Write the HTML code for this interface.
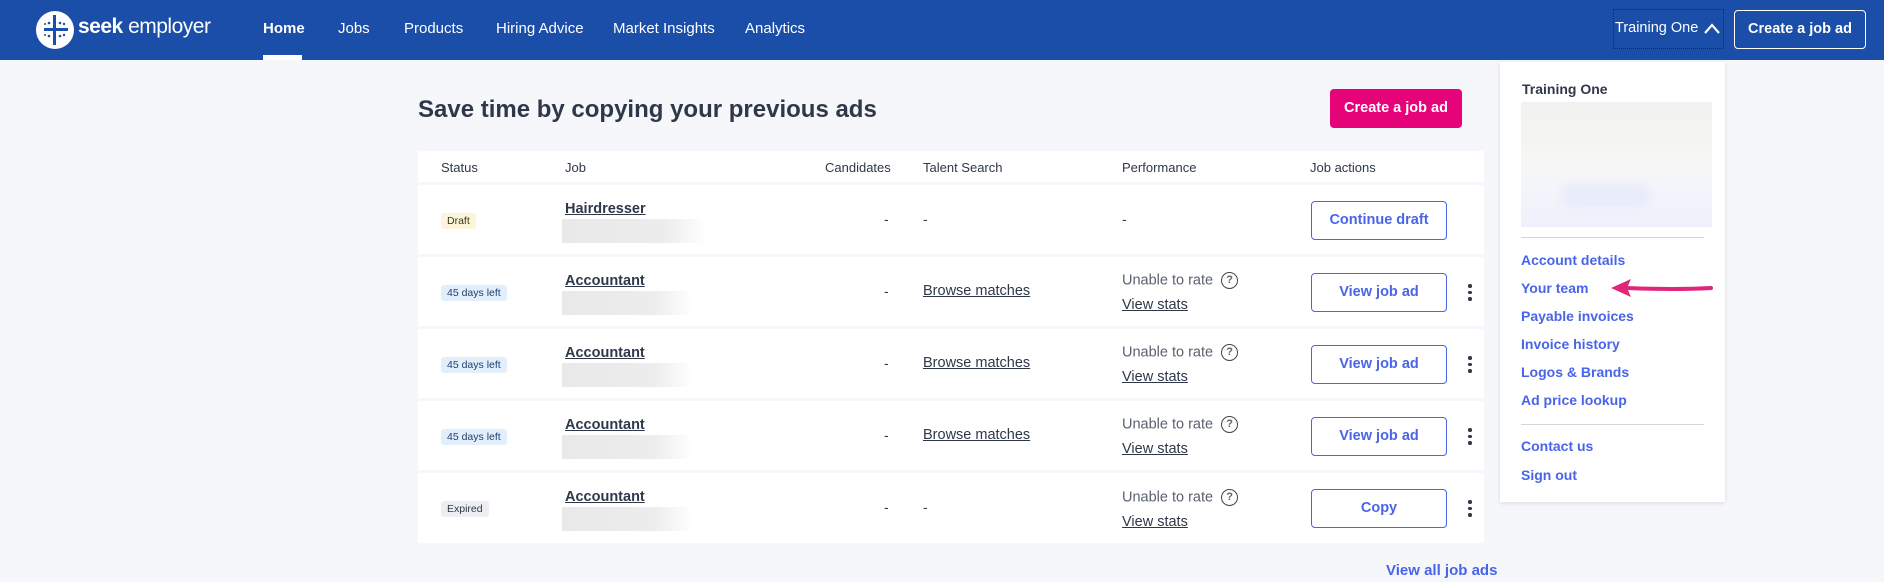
<!DOCTYPE html>
<html><head><meta charset="utf-8">
<style>
*{box-sizing:border-box;margin:0;padding:0}
body{width:1884px;height:582px;overflow:hidden;background:#f6f7fb;font-family:"Liberation Sans",Arial,sans-serif;color:#2e3849;position:relative}
.a{position:absolute;white-space:nowrap}
.hdr{position:absolute;left:0;top:0;width:1884px;height:60px;background:#1a4ea8}
.nav{color:#fff;font-size:15px;top:20px}
.row{position:absolute;left:418px;width:1066px;background:#fff}
.th{font-size:13px;color:#2e3849;top:160px}
.badge{font-size:10.5px;padding:2px 6px;border-radius:3px}
.btn{position:absolute;left:1311px;width:136px;height:39px;border:1px solid #4964e9;border-radius:4px;color:#4964e9;font-size:14.5px;font-weight:bold;text-align:center;line-height:37px;background:#fff}
.blur{position:absolute;height:24px;background:linear-gradient(90deg,#e9e9e9,#ececec 70%,#fff)}
.u{text-decoration:underline}
.dd{color:#4964e9;font-weight:bold;font-size:14px;left:1521px}
.kb{position:absolute;left:1468px;width:4px}
.kb i{display:block;width:3.5px;height:3.5px;border-radius:50%;background:#2e3849;margin-bottom:3px}
.q{display:inline-block;width:17px;height:17px;border:1.5px solid #444;border-radius:50%;font-size:11px;text-align:center;line-height:14px;font-weight:bold;margin-left:8px;vertical-align:middle}
</style></head><body>
<div class="hdr"></div>
<svg class="a" style="left:36px;top:11px" width="38" height="38" viewBox="0 0 38 38"><circle cx="19" cy="19" r="19" fill="#fff"/>
<g fill="#1a4ea8"><rect x="17" y="4" width="3" height="30"/><rect x="8" y="17" width="24" height="3"/><circle cx="13" cy="12" r="1.3"/><circle cx="13" cy="25" r="1.3"/><circle cx="24" cy="12" r="1.3"/><circle cx="24" cy="25" r="1.3"/><circle cx="28" cy="13" r="1.2"/><circle cx="28" cy="24" r="1.2"/><circle cx="9" cy="13" r="1"/><circle cx="9" cy="24" r="1"/></g></svg>
<div class="a" style="left:78px;top:15px;color:#fff;font-size:21px;letter-spacing:-0.5px"><b>seek</b> <span style="font-weight:300">employer</span></div>
<div class="a nav" style="left:263px;font-weight:bold">Home</div>
<div class="a" style="left:263px;top:55px;width:39px;height:5px;background:#fff"></div>
<div class="a nav" style="left:338px">Jobs</div>
<div class="a nav" style="left:404px">Products</div>
<div class="a nav" style="left:496px">Hiring Advice</div>
<div class="a nav" style="left:613px">Market Insights</div>
<div class="a nav" style="left:745px">Analytics</div>
<div class="a" style="left:1613px;top:9px;width:111px;height:40px;border:1px dotted #0b2a5e"></div>
<div class="a nav" style="left:1615px;top:20px;font-size:14.5px">Training One</div>
<svg class="a" style="left:1703px;top:21px" width="18" height="14"><path d="M2 12 L9 4 L16 12" stroke="#fff" stroke-width="2.2" fill="none"/></svg>
<div class="a" style="left:1734px;top:10px;width:132px;height:39px;border:1px solid #fff;border-radius:4px;color:#fff;font-weight:bold;font-size:14.5px;text-align:center;line-height:37px">Create a job ad</div>

<div class="a" style="left:418px;top:96px;font-size:24px;font-weight:bold;color:#2e3849">Save time by copying your previous ads</div>
<div class="a" style="left:1330px;top:89px;width:132px;height:39px;background:#e60278;border-radius:4px;color:#fff;font-weight:bold;font-size:14.5px;text-align:center;line-height:39px">Create a job ad</div>

<div class="row" style="top:151px;height:31px"></div>
<div class="a th" style="left:441px">Status</div>
<div class="a th" style="left:565px">Job</div>
<div class="a th" style="left:825px">Candidates</div>
<div class="a th" style="left:923px">Talent Search</div>
<div class="a th" style="left:1122px">Performance</div>
<div class="a th" style="left:1310px">Job actions</div>

<div class="row" style="top:185px;height:69px"></div>
<div class="a badge" style="left:441px;top:213px;background:#fdf5d9;color:#3b3520">Draft</div>
<div class="a u" style="left:565px;top:201px;font-weight:bold;font-size:14.5px">Hairdresser</div>
<div class="blur" style="left:562px;top:219px;width:145px"></div>
<div class="a" style="left:884px;top:211px;font-size:14px">-</div>
<div class="a" style="left:923px;top:211px;font-size:14px">-</div>
<div class="a" style="left:1122px;top:211px;font-size:14px">-</div>
<div class="btn" style="top:201px">Continue draft</div>

<div class="row" style="top:257px;height:69px"></div>
<div class="row" style="top:329px;height:69px"></div>
<div class="row" style="top:401px;height:69px"></div>
<div class="row" style="top:473px;height:70px"></div>

<div class="a badge" style="left:441px;top:285px;background:#e3eefb;color:#1d3f73">45 days left</div>
<div class="a badge" style="left:441px;top:357px;background:#e3eefb;color:#1d3f73">45 days left</div>
<div class="a badge" style="left:441px;top:429px;background:#e3eefb;color:#1d3f73">45 days left</div>
<div class="a badge" style="left:441px;top:501px;background:#eceef2;color:#2e3849">Expired</div>

<div class="a u" style="left:565px;top:273px;font-weight:bold;font-size:14.5px">Accountant</div>
<div class="blur" style="left:562px;top:291px;width:130px"></div>
<div class="a u" style="left:565px;top:345px;font-weight:bold;font-size:14.5px">Accountant</div>
<div class="blur" style="left:562px;top:363px;width:130px"></div>
<div class="a u" style="left:565px;top:417px;font-weight:bold;font-size:14.5px">Accountant</div>
<div class="blur" style="left:562px;top:435px;width:130px"></div>
<div class="a u" style="left:565px;top:489px;font-weight:bold;font-size:14.5px">Accountant</div>
<div class="blur" style="left:562px;top:507px;width:130px"></div>

<div class="a" style="left:884px;top:283px;font-size:14px">-</div>
<div class="a" style="left:884px;top:355px;font-size:14px">-</div>
<div class="a" style="left:884px;top:427px;font-size:14px">-</div>
<div class="a" style="left:884px;top:499px;font-size:14px">-</div>

<div class="a u" style="left:923px;top:283px;font-size:14.5px">Browse matches</div>
<div class="a u" style="left:923px;top:355px;font-size:14.5px">Browse matches</div>
<div class="a u" style="left:923px;top:427px;font-size:14.5px">Browse matches</div>
<div class="a" style="left:923px;top:499px;font-size:14px">-</div>

<div class="a" style="left:1122px;top:272px;font-size:14.5px;color:#5a6170">Unable to rate<span class="q">?</span></div>
<div class="a u" style="left:1122px;top:297px;font-size:14.5px">View stats</div>
<div class="a" style="left:1122px;top:344px;font-size:14.5px;color:#5a6170">Unable to rate<span class="q">?</span></div>
<div class="a u" style="left:1122px;top:369px;font-size:14.5px">View stats</div>
<div class="a" style="left:1122px;top:416px;font-size:14.5px;color:#5a6170">Unable to rate<span class="q">?</span></div>
<div class="a u" style="left:1122px;top:441px;font-size:14.5px">View stats</div>
<div class="a" style="left:1122px;top:489px;font-size:14.5px;color:#5a6170">Unable to rate<span class="q">?</span></div>
<div class="a u" style="left:1122px;top:514px;font-size:14.5px">View stats</div>

<div class="btn" style="top:273px">View job ad</div>
<div class="btn" style="top:345px">View job ad</div>
<div class="btn" style="top:417px">View job ad</div>
<div class="btn" style="top:489px">Copy</div>
<div class="kb" style="top:284px"><i></i><i></i><i></i></div>
<div class="kb" style="top:356px"><i></i><i></i><i></i></div>
<div class="kb" style="top:428px"><i></i><i></i><i></i></div>
<div class="kb" style="top:500px"><i></i><i></i><i></i></div>

<div class="a" style="left:1386px;top:562px;color:#4964e9;font-weight:bold;font-size:15px">View all job ads</div>

<div class="a" style="left:1500px;top:62px;width:225px;height:440px;background:#fff;box-shadow:0 1px 4px rgba(0,0,0,.12)"></div>
<div class="a" style="left:1522px;top:81px;font-weight:bold;font-size:14px;color:#2e3849">Training One</div>
<div class="a" style="left:1521px;top:102px;width:191px;height:125px;background:linear-gradient(180deg,#f1f1ef 0%,#f6f6f4 45%,#f4f5fb 70%,#eef0fb 100%)"></div>
<div class="a" style="left:1561px;top:185px;width:90px;height:22px;background:#e8ebf9;border-radius:10px;filter:blur(4px)"></div>
<div class="a" style="left:1521px;top:237px;width:183px;height:1px;background:#d3d5dc"></div>
<div class="a dd" style="top:252px">Account details</div>
<div class="a dd" style="top:280px">Your team</div>
<div class="a dd" style="top:308px">Payable invoices</div>
<div class="a dd" style="top:336px">Invoice history</div>
<div class="a dd" style="top:364px">Logos &amp; Brands</div>
<div class="a dd" style="top:392px">Ad price lookup</div>
<div class="a" style="left:1521px;top:424px;width:183px;height:1px;background:#d3d5dc"></div>
<div class="a dd" style="top:438px">Contact us</div>
<div class="a dd" style="top:467px">Sign out</div>

<svg class="a" style="left:1605px;top:276px" width="110" height="26"><path d="M106 12 Q70 14 22 12" stroke="#e0267a" stroke-width="4" fill="none" stroke-linecap="round"/><path d="M6 12 L26 3 L22 12 L26 21 Z" fill="#e0267a"/></svg>
</body></html>
